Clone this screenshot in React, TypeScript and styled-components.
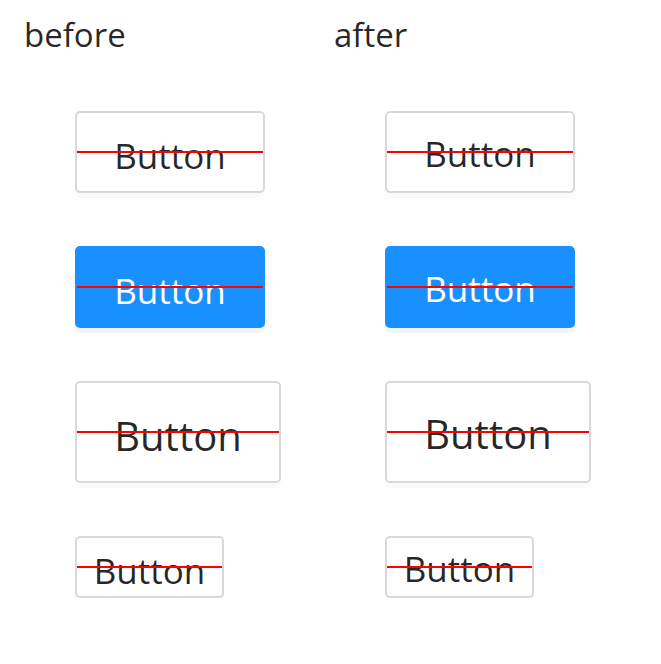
import styled, { createGlobalStyle, css } from "styled-components";

const GlobalStyle = createGlobalStyle`
  html, body {
    margin: 0;
    padding: 0;
    background: #ffffff;
  }
  body {
    font-family: "Open Sans", "Noto Sans", sans-serif;
    color: rgba(0, 0, 0, 0.85);
  }
`;

const Page = styled.div`
  display: grid;
  grid-template-columns: 310px 310px;
  padding: 8px 0 0 24px;
`;

const Column = styled.section`
  display: flex;
  flex-direction: column;
`;

const Label = styled.div`
  font-size: 33px;
  line-height: 54px;
  height: 54px;
  color: rgba(0, 0, 0, 0.85);
`;

const Stack = styled.div`
  display: flex;
  flex-direction: column;
  align-items: flex-start;
  gap: 53px;
  margin: 49px 0 0 51px;
`;

type Size = "default" | "large" | "small";

const sizes = {
  default: css`
    height: 82px;
    width: 190px;
    font-size: 35px;
  `,
  large: css`
    height: 102px;
    width: 206px;
    font-size: 40px;
  `,
  small: css`
    height: 62px;
    width: 149px;
    font-size: 35px;
  `,
};

const Btn = styled.button<{ $primary?: boolean; $size: Size; $fixed?: boolean }>`
  position: relative;
  display: flex;
  align-items: center;
  justify-content: center;
  box-sizing: border-box;
  padding: ${(p) => (p.$fixed ? "2px 0 0" : "6px 0 0")};
  font-family: "Open Sans", "Noto Sans", sans-serif;
  font-weight: 400;
  border-radius: 5px;
  border: 2px solid ${(p) => (p.$primary ? "#1890ff" : "#d9d9d9")};
  background: ${(p) => (p.$primary ? "#1890ff" : "#ffffff")};
  color: ${(p) => (p.$primary ? "#ffffff" : "rgba(0, 0, 0, 0.85)")};
  box-shadow: ${(p) =>
    p.$primary ? "0 5px 0 rgba(0, 0, 0, 0.045)" : "0 5px 0 rgba(0, 0, 0, 0.02)"};
  ${(p) => sizes[p.$size]}

  &::after {
    content: "";
    position: absolute;
    left: 0;
    right: 0;
    top: calc(50% - 1px);
    height: 2px;
    background: #ff0000;
  }
`;

const rows: { primary?: boolean; size: Size }[] = [
  { size: "default" },
  { primary: true, size: "default" },
  { size: "large" },
  { size: "small" },
];

function Demo({ title, fixed }: { title: string; fixed?: boolean }) {
  return (
    <Column>
      <Label>{title}</Label>
      <Stack>
        {rows.map((r, i) => (
          <Btn key={i} $primary={r.primary} $size={r.size} $fixed={fixed}>
            Button
          </Btn>
        ))}
      </Stack>
    </Column>
  );
}

export default function App() {
  return (
    <>
      <GlobalStyle />
      <Page>
        <Demo title="before" />
        <Demo title="after" fixed />
      </Page>
    </>
  );
}
